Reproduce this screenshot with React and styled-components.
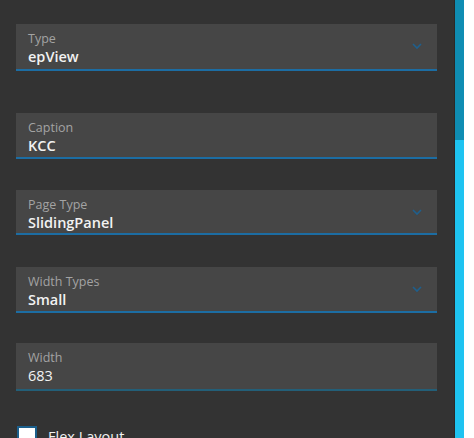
import React from "react";
import styled, { createGlobalStyle } from "styled-components";

const Global = createGlobalStyle`
  html, body { margin: 0; padding: 0; background: #ffffff; }
  body { font-family: "Open Sans", "Noto Sans", sans-serif; }
`;

const Page = styled.div`
  display: flex;
  width: 474px;
  height: 438px;
  overflow: hidden;
  background: #ffffff;
`;

const Panel = styled.div`
  width: 455px;
  flex: none;
  background: #333333;
  padding: 24px 17px 0 16px;
  box-sizing: border-box;
  display: flex;
  flex-direction: column;
  border-right: 1px solid #2a2a2a;
`;

const Scrollbar = styled.div`
  width: 9px;
  flex: none;
  display: flex;
  flex-direction: column;
`;

const Track = styled.div`
  height: 140px;
  flex: none;
  background: #0f8db3;
`;

const Thumb = styled.div`
  flex: 1;
  background: #1ec3f1;
`;

const Field = styled.div`
  position: relative;
  flex: none;
  height: ${(p) => p.$h || 46}px;
  box-sizing: border-box;
  background: #464646;
  border-bottom: 2px solid ${(p) => p.$line || "#1c6da3"};
  padding: 7px 12px 0 12px;
  margin-bottom: ${(p) => p.$gap}px;
  display: flex;
  flex-direction: column;
`;

const Label = styled.div`
  font-size: 12.5px;
  line-height: 16px;
  color: #a3a3a3;
`;

const Value = styled.div`
  font-size: 14.5px;
  line-height: 19px;
  font-weight: ${(p) => (p.$regular ? 500 : 600)};
  color: #f2f2f2;
`;

const Chevron = styled.svg`
  position: absolute;
  right: 15px;
  top: 18px;
  width: 10px;
  height: 8px;
`;

const CheckRow = styled.label`
  display: flex;
  flex: none;
  align-items: center;
  gap: 11px;
  margin-left: 1px;
`;

const Box = styled.span`
  width: 20px;
  height: 20px;
  box-sizing: border-box;
  background: #ffffff;
  border: 2px solid #1b5f8c;
  flex: none;
`;

const CheckText = styled.span`
  font-size: 14.5px;
  line-height: 20px;
  font-weight: 500;
  color: #f2f2f2;
  position: relative;
  top: 1px;
`;

const ChevronIcon = () => (
  <Chevron viewBox="0 0 10 8">
    <polyline points="1,2 5,6 9,2" fill="none" stroke="#1f5f8c" strokeWidth="1.6" />
  </Chevron>
);

const fields = [
  { label: "Type", value: "epView", select: true, gap: 42, h: 47 },
  { label: "Caption", value: "KCC", gap: 31 },
  { label: "Page Type", value: "SlidingPanel", select: true, gap: 32, h: 45 },
  { label: "Width Types", value: "Small", select: true, gap: 30 },
  { label: "Width", value: "683", gap: 35, h: 48, line: "#235f78", regular: true },
];

export default function App() {
  return (
    <Page>
      <Global />
      <Panel>
        {fields.map((f) => (
          <Field key={f.label} $gap={f.gap} $line={f.line} $h={f.h}>
            <Label>{f.label}</Label>
            <Value $regular={f.regular}>{f.value}</Value>
            {f.select && <ChevronIcon />}
          </Field>
        ))}
        <CheckRow>
          <Box />
          <CheckText>Flex Layout</CheckText>
        </CheckRow>
      </Panel>
      <Scrollbar>
        <Track />
        <Thumb />
      </Scrollbar>
    </Page>
  );
}
